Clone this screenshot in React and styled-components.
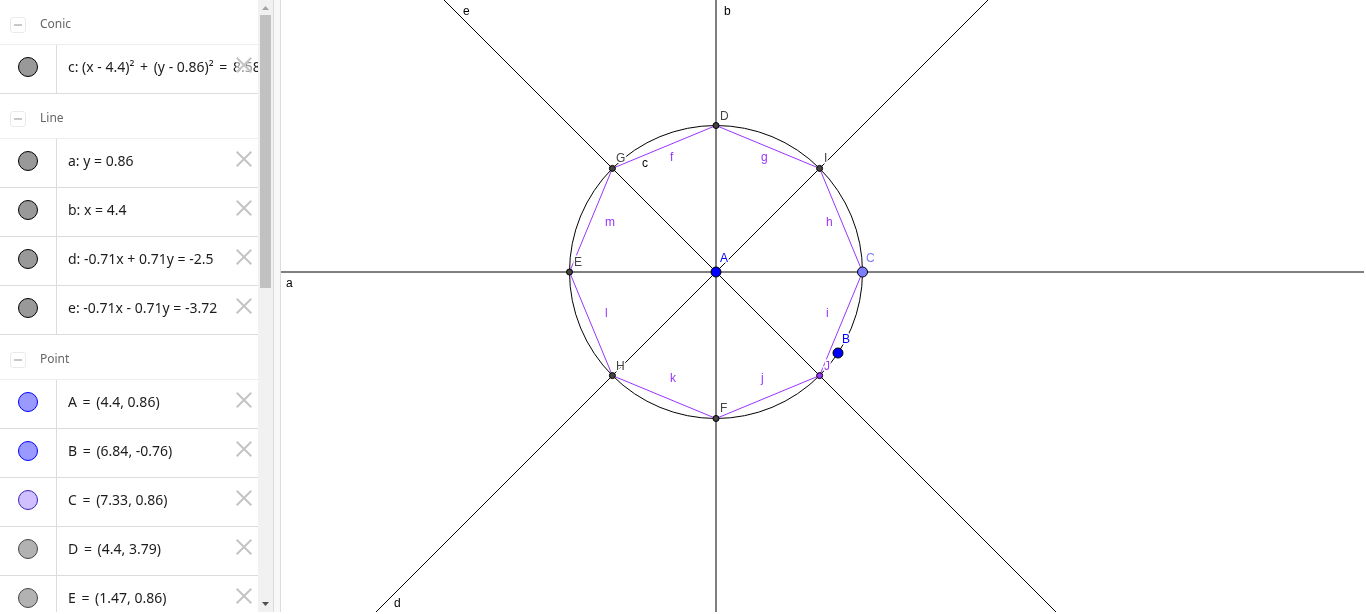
import React from "react";
import styled, { createGlobalStyle } from "styled-components";

const GlobalStyle = createGlobalStyle`
  * {
    box-sizing: border-box;
  }
  body {
    margin: 0;
    background: #fff;
    overflow: hidden;
  }
`;

const dark = { fill: "#999999", border: "#000000" };
const blue = { fill: "#9999ff", border: "#0000ff" };
const lightBlue = { fill: "#d0c0ff", border: "#3a20b8" };
const gray = { fill: "#b2b2b2", border: "#444444" };

const groups = [
  {
    name: "Conic",
    wide: true,
    items: [{ text: "c: (x - 4.4)² + (y - 0.86)² = 8.58", color: dark }]
  },
  {
    name: "Line",
    items: [
      { text: "a: y = 0.86", color: dark },
      { text: "b: x = 4.4", color: dark },
      { text: "d: -0.71x + 0.71y = -2.5", color: dark },
      { text: "e: -0.71x - 0.71y = -3.72", color: dark }
    ]
  },
  {
    name: "Point",
    wide: true,
    items: [
      { text: "A = (4.4, 0.86)", color: blue },
      { text: "B = (6.84, -0.76)", color: blue },
      { text: "C = (7.33, 0.86)", color: lightBlue },
      { text: "D = (4.4, 3.79)", color: gray },
      { text: "E = (1.47, 0.86)", color: gray }
    ]
  }
];

// canvas coordinates, in pixels from the top left of the graphics view
const PURPLE = "#9933ff";
const center = { x: 435, y: 272 };
const octagon = [
  [435, 125.5],
  [538.6, 168.4],
  [581.5, 272],
  [538.6, 375.6],
  [435, 418.5],
  [331.4, 375.6],
  [288.5, 272],
  [331.4, 168.4]
];

const points = [
  { x: 435, y: 125.5, r: 3, fill: "#444" },
  { x: 288.5, y: 272, r: 3, fill: "#444" },
  { x: 435, y: 418.5, r: 3, fill: "#444" },
  { x: 331.4, y: 168.4, r: 3, fill: "#444" },
  { x: 331.4, y: 375.6, r: 3, fill: "#444" },
  { x: 538.6, y: 168.4, r: 3, fill: "#444" },
  { x: 538.6, y: 375.6, r: 3, fill: PURPLE },
  { x: 435, y: 272, r: 5, fill: "#0000ff" },
  { x: 557, y: 353, r: 5, fill: "#0000ff" },
  { x: 581.5, y: 272, r: 5, fill: "#7d7dff" }
];

const labels = [
  { text: "a", x: 5, y: 287, color: "#000" },
  { text: "b", x: 443, y: 15, color: "#000" },
  { text: "c", x: 361, y: 167, color: "#000" },
  { text: "d", x: 113, y: 607, color: "#000" },
  { text: "e", x: 182, y: 15, color: "#000" },
  { text: "f", x: 389, y: 161, color: PURPLE },
  { text: "g", x: 480, y: 161, color: PURPLE },
  { text: "h", x: 545, y: 226, color: PURPLE },
  { text: "i", x: 545, y: 317, color: PURPLE },
  { text: "j", x: 480, y: 382, color: PURPLE },
  { text: "k", x: 389, y: 382, color: PURPLE },
  { text: "l", x: 324, y: 317, color: PURPLE },
  { text: "m", x: 324, y: 226, color: PURPLE },
  { text: "A", x: 439, y: 262, color: "#0000ff" },
  { text: "B", x: 561, y: 343, color: "#0000ff" },
  { text: "C", x: 585, y: 262, color: "#7d7dff" },
  { text: "D", x: 439, y: 120, color: "#444" },
  { text: "E", x: 293, y: 266, color: "#444" },
  { text: "F", x: 439, y: 412, color: "#444" },
  { text: "G", x: 335, y: 162, color: "#444" },
  { text: "H", x: 335, y: 370, color: "#444" },
  { text: "I", x: 543, y: 162, color: "#444" },
  { text: "J", x: 543, y: 370, color: PURPLE }
];

const typeset = (text, wide) =>
  text.split(/([=+])/).map((part, index) =>
    index % 2 ? (
      <Operator key={index} $wide={wide}>
        {part}
      </Operator>
    ) : (
      part
    )
  );

const AlgebraView = () => (
  <Sidebar>
    <List>
      {groups.map(group => (
        <section key={group.name}>
          <GroupHeader>
            <CollapseButton aria-label={`Collapse ${group.name}`} />
            <GroupName>{group.name}</GroupName>
          </GroupHeader>
          {group.items.map(item => (
            <Row key={item.text}>
              <MarbleCell>
                <Marble
                  aria-label="Show or hide"
                  $fill={item.color.fill}
                  $border={item.color.border}
                />
              </MarbleCell>
              <Formula>{typeset(item.text, group.wide)}</Formula>
              <DeleteButton aria-label="Delete">
                <svg width="16" height="16" viewBox="0 0 16 16">
                  <path d="M0.7 0.7L15.3 15.3M15.3 0.7L0.7 15.3" stroke="#c4c4c4" strokeWidth="2" />
                </svg>
              </DeleteButton>
            </Row>
          ))}
        </section>
      ))}
    </List>
    <Scrollbar>
      <Arrow viewBox="0 0 15 15">
        <path d="M4 10L7.5 6L11 10Z" fill="#a3a3a3" />
      </Arrow>
      <Thumb />
      <Arrow viewBox="0 0 15 15">
        <path d="M4 5L11 5L7.5 9Z" fill="#505050" />
      </Arrow>
    </Scrollbar>
  </Sidebar>
);

const GraphicsView = () => (
  <Canvas>
    <g stroke="#000" strokeWidth="1" fill="none">
      <circle cx={center.x} cy={center.y} r="146.5" />
      <line x1="0" y1="272" x2="100%" y2="272" />
      <line x1="435" y1="0" x2="435" y2="100%" />
      <line x1="-565" y1="1272" x2="1435" y2="-728" />
      <line x1="-565" y1="-728" x2="1435" y2="1272" />
    </g>
    <polygon points={octagon.join(" ")} fill="none" stroke={PURPLE} />
    {points.map(p => (
      <circle key={`${p.x}-${p.y}`} cx={p.x} cy={p.y} r={p.r} fill={p.fill} stroke="#000" />
    ))}
    {labels.map(l => (
      <Label key={l.text} x={l.x} y={l.y} fill={l.color}>
        {l.text}
      </Label>
    ))}
  </Canvas>
);

const App = () => (
  <Page>
    <GlobalStyle />
    <AlgebraView />
    <Splitter />
    <GraphicsView />
  </Page>
);

const Page = styled.main`
  display: flex;
  height: 100vh;
  padding: 0 2px 2px 0;
  will-change: transform;
`;

const Sidebar = styled.aside`
  display: flex;
  flex: none;
  width: 273px;
  font-family: "Noto Sans", sans-serif;
`;

const List = styled.div`
  flex: 1;
  min-width: 0;
  overflow: hidden;
`;

const GroupHeader = styled.header`
  display: flex;
  align-items: center;
  gap: 14px;
  height: 45px;
  padding: 3px 10px 0;
  border-bottom: 1px solid #eee;
`;

const CollapseButton = styled.button`
  display: flex;
  align-items: center;
  justify-content: center;
  width: 16px;
  height: 16px;
  margin-top: 2px;
  padding: 0;
  background: #fff;
  border: 1px solid #eaeaea;
  border-radius: 3px;

  &::before {
    content: "";
    width: 8px;
    height: 2px;
    background: #c8c8c8;
  }
`;

const GroupName = styled.h2`
  margin: 0;
  color: #666;
  font-size: 12px;
  font-weight: 400;
  line-height: 16px;
`;

const Row = styled.div`
  position: relative;
  display: flex;
  height: 49px;
  border-bottom: 1px solid #dcdcdc;
`;

const MarbleCell = styled.div`
  flex: none;
  width: 57px;
  padding: 12px 18px;
  border-right: 1px solid #dcdcdc;
`;

const Marble = styled.button`
  display: block;
  width: 20px;
  height: 20px;
  padding: 0;
  background: ${props => props.$fill};
  border: 1px solid ${props => props.$border};
  border-radius: 50%;
`;

const Formula = styled.span`
  padding-left: 11px;
  color: #1c1c1c;
  font-size: 14px;
  line-height: 44px;
  white-space: nowrap;
`;

const Operator = styled.span`
  margin: 0 ${props => (props.$wide ? 2 : 0)}px;
`;

const DeleteButton = styled.button`
  position: absolute;
  top: 12px;
  right: 6px;
  width: 16px;
  height: 16px;
  padding: 0;
  background: rgba(255, 255, 255, 0.5);
  border: none;

  svg {
    display: block;
  }
`;

const Scrollbar = styled.div`
  display: flex;
  flex-direction: column;
  width: 15px;
  background: #f1f1f1;
`;

const Arrow = styled.svg`
  flex: none;
  width: 15px;
  height: 15px;

  &:last-child {
    margin-top: auto;
  }
`;

const Thumb = styled.div`
  height: 273px;
  margin: 0 2px;
  background: #c1c1c1;
`;

const Splitter = styled.div`
  flex: none;
  width: 8px;
  background: #f8f8f8;
  border: solid #dcdcdc;
  border-width: 0 1px;
`;

const Canvas = styled.svg`
  flex: 1;
  min-width: 0;
  height: 100%;
`;

const Label = styled.text`
  font-family: "Liberation Sans", Arial, sans-serif;
  font-size: 12px;
  stroke: #fff;
  stroke-width: 3px;
  paint-order: stroke;
`;

export default App;
